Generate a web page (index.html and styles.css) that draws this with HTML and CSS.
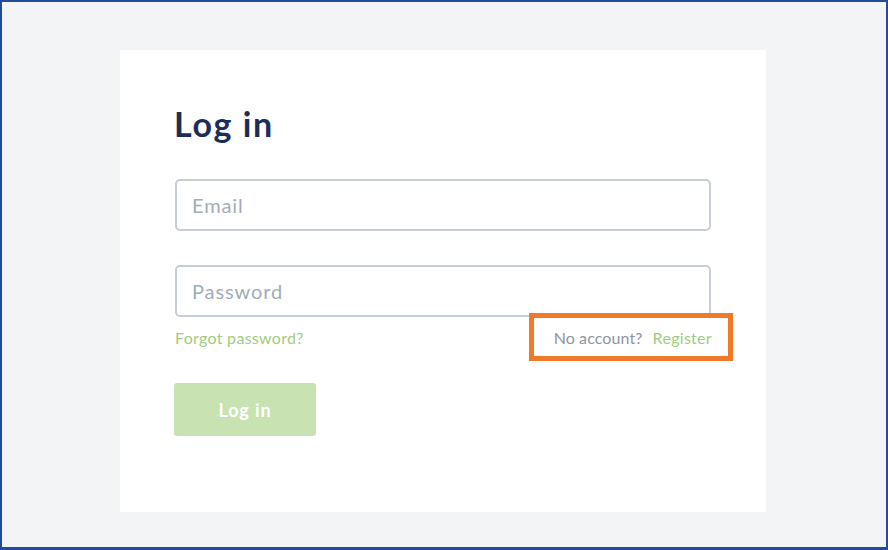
FILE: index.html
```html
<!DOCTYPE html>
<html lang="en">
<head>
<meta charset="utf-8">
<title>Log in</title>
<link rel="stylesheet" href="styles.css">
</head>
<body>
<div class="frame">
  <div class="card">
    <h1 class="title">Log in</h1>
    <div class="field"><input class="input" type="email" placeholder="Email"></div>
    <div class="field"><input class="input" type="password" placeholder="Password"></div>
    <div class="links">
      <a class="link" href="#">Forgot password?</a>
      <span class="register-box"><span class="muted">No account?</span><a class="link" href="#">Register</a></span>
    </div>
    <button class="btn" type="button">Log in</button>
  </div>
</div>
</body>
</html>
```
FILE: styles.css
```css
* { box-sizing: border-box; }
html, body { margin: 0; padding: 0; }
body {
  width: 888px;
  height: 550px;
  font-family: Lato, "Open Sans", sans-serif;
}
.frame {
  width: 888px;
  height: 550px;
  background: #f3f4f6;
  border: 2px solid #1f4c9b;
  border-bottom-width: 3px;
  padding: 48px 0 0 118px;
}
.card {
  width: 646px;
  height: 462px;
  background: #ffffff;
  padding: 54px 55px 0 55px;
  display: flex;
  flex-direction: column;
}
.title {
  margin: 0 0 1px -1px;
  font-size: 34px;
  font-weight: 700;
  line-height: 40px;
  color: #1c2e57;
  letter-spacing: 1.6px;
}
.field { margin-top: 34px; }
.input {
  display: block;
  width: 536px;
  height: 52px;
  border: 2px solid #c6cdd7;
  border-radius: 5px;
  padding: 0 15px 1px;
  font-family: Lato, "Open Sans", sans-serif;
  font-size: 20px;
  letter-spacing: 0.9px;
  color: #444;
  background: #fff;
  outline: none;
}
.input::placeholder { color: #a2acb9; }
.links {
  margin-top: 1px;
  display: flex;
  justify-content: space-between;
  align-items: center;
  height: 38px;
}
.link {
  color: #9fcb82;
  text-decoration: none;
  font-size: 16px;
  letter-spacing: 0.3px;
}
.register-box {
  display: flex;
  align-items: center;
  gap: 10px;
  height: 38px;
  padding: 0 16px 0 20px;
  margin-right: -17px;
  outline: 5px solid #f07a2a;
}
.muted { color: #8d959f; font-size: 16px; letter-spacing: 0.1px; }
.btn {
  margin-top: 27px;
  margin-left: -1px;
  width: 142px;
  height: 53px;
  border: none;
  border-radius: 3px;
  background: #c9e2b2;
  color: #ffffff;
  font-family: Lato, "Open Sans", sans-serif;
  font-weight: 700;
  font-size: 18px;
  letter-spacing: 0.9px;
}
```
